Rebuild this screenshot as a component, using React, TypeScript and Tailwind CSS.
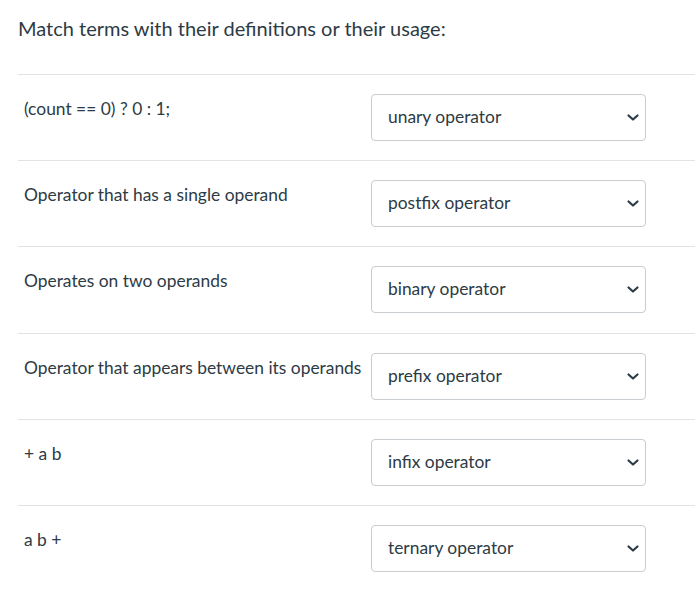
import React from "react";

const rows = [
  ["(count == 0) ? 0 : 1;", "unary operator"],
  ["Operator that has a single operand", "postfix operator"],
  ["Operates on two operands", "binary operator"],
  ["Operator that appears between its operands", "prefix operator"],
  ["+ a b", "infix operator"],
  ["a b +", "ternary operator"],
];

function Chevron() {
  return (
    <svg width="14" height="9" viewBox="0 0 14 9" className="shrink-0">
      <path d="M2.5 2.5 L7 6.5 L11.5 2.5" fill="none" stroke="#2d3b45" strokeWidth="2.2" strokeLinecap="round" strokeLinejoin="round" />
    </svg>
  );
}

export default function App() {
  return (
    <div className="min-h-[599px] bg-white pl-[18px] text-[#2d3b45]" style={{ fontFamily: "Lato, 'Noto Sans', sans-serif" }}>
      <div className="pt-[13px] pb-[31px] text-[20px] leading-[30px]">Match terms with their definitions or their usage:</div>
      {rows.map(([l, r], i) => (
        <div key={i} className="flex border-t border-[#e3e3e3]">
          <div className="w-[353px] pl-[6px] pt-[21px] text-[17.4px] leading-[26px]">{l}</div>
          <div className="pt-[19px] pb-[19.2px]">
            <div className="flex h-[47px] w-[275px] items-center justify-between rounded-[4px] border border-[#c7cdd1] pl-[16px] pr-[5px] text-[17.4px]">
              <span className="-mt-[1px]">{r}</span>
              <Chevron />
            </div>
          </div>
        </div>
      ))}
    </div>
  );
}
